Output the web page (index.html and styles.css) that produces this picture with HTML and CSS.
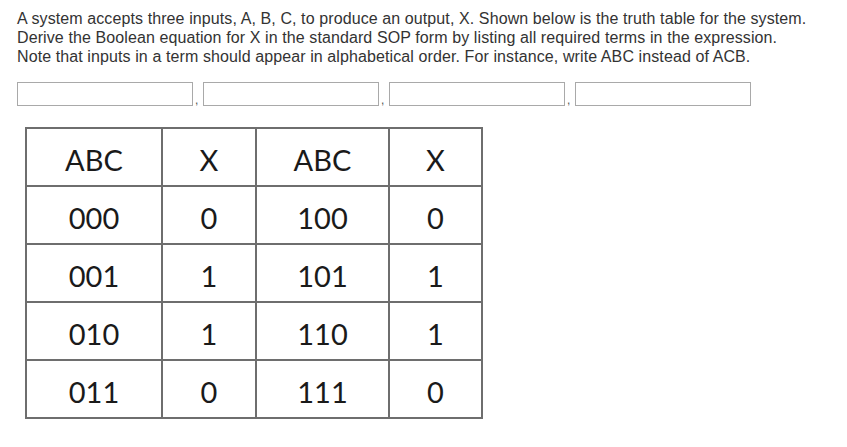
FILE: index.html
```html
<!DOCTYPE html>
<html>
<head>
<meta charset="utf-8">
<link rel="stylesheet" href="styles.css">
</head>
<body>
<div class="question">
  <p class="prompt">A system accepts three inputs, A, B, C, to produce an output, X. Shown below is the truth table for the system.<br>Derive the Boolean equation for X in the standard SOP form by listing all required terms in the expression.<br>Note that inputs in a term should appear in alphabetical order. For instance, write ABC instead of ACB.</p>
  <div class="answers">
    <input class="blank" type="text"><span class="sep">,</span>
    <input class="blank" type="text"><span class="sep">,</span>
    <input class="blank" type="text"><span class="sep">,</span>
    <input class="blank" type="text">
  </div>
  <table class="truth">
    <tr><td class="c1">ABC</td><td class="c2">X</td><td class="c3">ABC</td><td class="c4">X</td></tr>
    <tr><td>000</td><td>0</td><td>100</td><td>0</td></tr>
    <tr><td>001</td><td>1</td><td>101</td><td>1</td></tr>
    <tr><td>010</td><td>1</td><td>110</td><td>1</td></tr>
    <tr><td>011</td><td>0</td><td>111</td><td>0</td></tr>
  </table>
</div>
</body>
</html>
```
FILE: styles.css
```css
html, body {
  margin: 0;
  padding: 0;
  background: #ffffff;
}
.question {
  padding: 9px 17px 0 17px;
  font-family: "Liberation Sans", Arial, sans-serif;
  color: #333333;
}
.prompt {
  margin: 0;
  font-size: 16px;
  line-height: 19px;
  letter-spacing: 0.1px;
}
.answers {
  display: flex;
  align-items: flex-end;
  margin-top: 16px;
  height: 24px;
}
.blank {
  box-sizing: border-box;
  width: 176px;
  height: 24px;
  margin: 0;
  padding: 0 4px;
  border: 1px solid #a9a9a9;
  border-radius: 0;
  background: #fff;
  outline: none;
}
.sep {
  width: 10px;
  padding-left: 2px;
  box-sizing: border-box;
  font-size: 12px;
  line-height: 12px;
  color: #555;
}
.truth {
  margin: 21px 0 0 8px;
  border-collapse: collapse;
  font-family: Lato, "Open Sans", sans-serif;
  font-size: 29px;
  color: #1a1a1a;
}
.truth td {
  border: 2px solid #6e6e6e;
  height: 58px;
  padding: 5px 0 0 0;
  text-align: center;
  vertical-align: middle;
  box-sizing: border-box;
}
.c1 { width: 136px; }
.c2 { width: 94px; }
.c3 { width: 133px; }
.c4 { width: 93px; }
```
